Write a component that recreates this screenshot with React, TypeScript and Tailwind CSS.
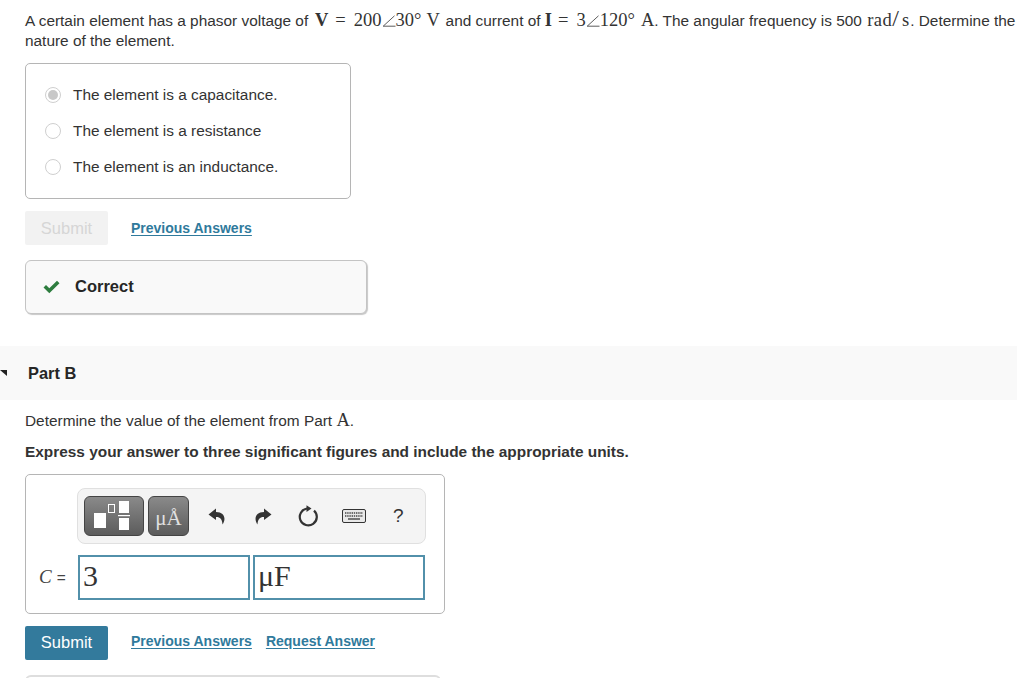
const sans = "font-['Liberation_Sans',Arial,sans-serif]";
const M = ({ children, b, cls }: { children: React.ReactNode; b?: boolean; cls?: string }) => (
  <span className={`font-['Liberation_Serif',serif] text-[18.5px] leading-[0] ${b ? 'font-bold' : ''} ${cls ?? ''}`}>{children}</span>
);

const Angle = () => (
  <svg width="14" height="12" viewBox="0 0 14 12" className="inline-block align-[-1px]" fill="none" stroke="#333" strokeWidth="0.8">
    <path d="M12.5 0.8 L1.2 11.2 H13.5" />
  </svg>
);

const Radio = ({ label, on }: { label: string; on?: boolean }) => (
  <div className="flex h-[36px] items-center">
    <span className="ml-[19px] flex h-4 w-4 items-center justify-center rounded-full border border-[#cfcfcf] bg-white">
      {on && <span className="h-[10px] w-[10px] rounded-full bg-[#c8c8c8]" />}
    </span>
    <span className="ml-[12px] text-[15.4px] text-[#333]">{label}</span>
  </div>
);

const Link = ({ children }: { children: React.ReactNode }) => (
  <a className="text-[14px] font-bold text-[#2f7a9c] underline underline-offset-2">{children}</a>
);

const Undo = ({ flip }: { flip?: boolean }) => (
  <svg width="18" height="17" viewBox="0 0 18 17" className={flip ? '-scale-x-100' : ''} fill="#333">
    <path d="M8 0.5 L0.5 6.5 L8 12 V9 C12 8.8 14 10.8 14.6 16.5 C18.4 10.5 16.5 4.2 8 4 Z" />
  </svg>
);

export default function App() {
  return (
    <div className={`${sans} h-[678px] w-[1024px] overflow-hidden bg-white text-[#333]`}>
      <div className="pl-[25px] pt-[11px]">
        <p className="whitespace-nowrap text-[15.4px] leading-[20px]">
          A certain element has a phasor voltage of <M b cls="ml-[2.5px]">V</M><M cls="ml-[7px]">=</M><M cls="ml-[8px]">200</M><Angle /><M>30°</M><M cls="ml-[5px] mr-[1.5px]">V</M> and current of <M b>I</M><M cls="ml-[6px]">=</M><M cls="ml-[8px]">3</M><Angle /><M>120°</M><M cls="ml-[6px]">A</M>. The angular frequency is 500 <M cls="ml-[1px] tracking-[0.5px]">rad</M><M cls="text-[24px]">/</M><M cls="ml-[3px] mr-[1px]">s</M>. Determine the
          <br />
          nature of the element.
        </p>

        <div className="mt-[12px] flex h-[136px] w-[326px] flex-col justify-center rounded-[5px] border border-[#b5b5b5]">
          <Radio label="The element is a capacitance." on />
          <Radio label="The element is a resistance" />
          <Radio label="The element is an inductance." />
        </div>

        <div className="mt-[12px] flex items-center">
          <button className="h-[34px] w-[83px] rounded-[2px] bg-[#f2f2f2] text-[16.5px] text-[#d6d6d6]">Submit</button>
          <span className="ml-[23px]"><Link>Previous Answers</Link></span>
        </div>

        <div className="mt-[15px] flex h-[54px] w-[342px] items-center rounded-[6px] border border-[#c4c4c4] bg-[#f9f9f9] shadow-[1px_1px_1px_#c8c8c8]">
          <svg width="17" height="14" viewBox="0 0 17 14" className="ml-[17px]" fill="#2e7d3f">
            <path d="M0.5 7.5 L3 5 L6.3 8.3 L14 0.8 L16.5 3.3 L6.3 13.3 Z" />
          </svg>
          <span className="ml-[15px] pb-[1px] text-[16.5px] font-bold text-[#262626]">Correct</span>
        </div>
      </div>

      <div className="relative mt-[32px] flex h-[54px] w-[1017px] items-center bg-[#f9f9f9] pl-[28px]">
        <span className="absolute left-0 top-[24px] h-0 w-0 border-l-[7px] border-r-0 border-t-[6px] border-l-transparent border-t-[#222]" />
        <span className="text-[16.4px] font-bold text-[#262626]">Part B</span>
      </div>

      <div className="pl-[25px]">
        <p className="mt-[11px] text-[15.4px] leading-[20px]">Determine the value of the element from Part <M>A</M>.</p>
        <p className="mt-[11px] text-[15.4px] font-bold leading-[20px]">Express your answer to three significant figures and include the appropriate units.</p>

        <div className="mt-[12px] h-[140px] w-[420px] rounded-[5px] border border-[#b5b5b5]">
          <div className="ml-[51px] mt-[13px] flex h-[56px] w-[349px] items-center rounded-[8px] border border-[#e0e0e0] bg-[#f4f4f4]">
            <div className="ml-[6px] flex h-[40px] w-[60px] items-center justify-center rounded-[6px] border border-[#444] bg-gradient-to-b from-[#8a8a8a] to-[#5c5c5c]">
              <svg width="58" height="38" viewBox="0 0 58 38">
                <rect x="9" y="16" width="12" height="15" fill="#fff" />
                <rect x="23.5" y="7.5" width="6" height="8" fill="none" stroke="#fff" strokeWidth="1" />
                <rect x="34" y="4" width="10" height="12" fill="#fff" />
                <rect x="33" y="18" width="12" height="1.2" fill="#fff" />
                <rect x="34" y="21" width="10" height="12" fill="#fff" />
              </svg>
            </div>
            <div className="ml-[4px] flex h-[40px] w-[41px] items-center justify-center rounded-[6px] border border-[#444] bg-gradient-to-b from-[#8a8a8a] to-[#5c5c5c] pt-[5px] font-['Liberation_Serif',serif] text-[21px] text-[#e0e0e0]">
              μÅ
            </div>
            <div className="ml-[19px]"><Undo /></div>
            <div className="ml-[28px]"><Undo flip /></div>
            <svg width="24" height="24" viewBox="0 0 24 24" className="ml-[24px]" fill="none">
              <path d="M18 6.6 A8.5 8.5 0 1 1 11 4.5" stroke="#333" strokeWidth="2.2" />
              <path d="M10.5 1.2 L15.5 4.6 L10.5 8 Z" fill="#333" />
            </svg>
            <svg width="24" height="14" viewBox="0 0 24 14" className="ml-[22px]" fill="none">
              <rect x="0.5" y="0.5" width="23" height="13" rx="1.5" fill="#e8e8e8" stroke="#333" />
              <path d="M3 4 H21 M3 7 H21" stroke="#444" strokeWidth="1.4" strokeDasharray="1.4 0.8" />
              <path d="M6 10 H18" stroke="#444" strokeWidth="1.4" />
            </svg>
            <span className="ml-[27px] text-[19px] text-[#333]">?</span>
          </div>

          <div className="mt-[11px] flex items-center">
            <span className="ml-[13px] flex w-[39px] items-center text-[15.5px] text-[#444]">
              <span className="font-['Liberation_Serif',serif] text-[19px] italic">C</span>
              <span className="ml-[5px]">=</span>
            </span>
            <div className="flex h-[45px] w-[172px] items-center border-2 border-[#5290aa] pb-[4px] pl-[3px] font-['Liberation_Serif',serif] text-[30px] text-[#333]">3</div>
            <div className="ml-[3px] flex h-[45px] w-[172px] items-center border-2 border-[#5290aa] pb-[4px] pl-[3px] font-['Liberation_Serif',serif] text-[30px] text-[#333]">μF</div>
          </div>
        </div>

        <div className="mt-[12px] flex h-[34px] items-center">
          <button className="h-[34px] w-[83px] rounded-[2px] bg-[#337a9c] pb-[1px] text-[16.5px] text-white">Submit</button>
          <span className="ml-[23px] -translate-y-[2px]"><Link>Previous Answers</Link></span>
          <span className="ml-[14px] -translate-y-[2px]"><Link>Request Answer</Link></span>
        </div>

        <div className="mt-[15px] h-[20px] w-[416px] rounded-[6px] border-2 border-[#dedede]" />
      </div>
    </div>
  );
}
